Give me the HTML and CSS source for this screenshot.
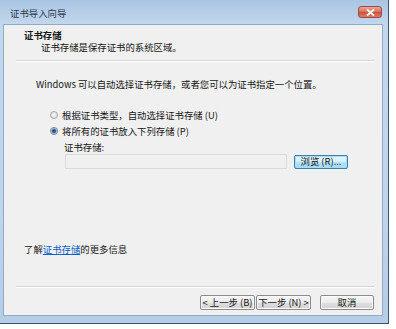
FILE: index.html
```html
<!DOCTYPE html>
<html lang="zh-CN">
<head>
    <meta charset="UTF-8">
    <meta name="viewport" content="width=device-width, initial-scale=1.0">
    <title>证书导入向导</title>
    <link rel="stylesheet" href="styles.css">
</head>
<body>

<div class="window">
    <div class="titlebar">
        <span class="title">证书导入向导</span>
        <span class="close-btn">
            <svg width="9" height="7" viewBox="0 0 9 7"><path d="M1 0.5 L8 6.5 M8 0.5 L1 6.5" stroke="#fff" stroke-width="1.8"/></svg>
        </span>
    </div>

    <div class="client">
        <div class="header">
            <div class="header-title">证书存储</div>
            <div class="header-sub">证书存储是保存证书的系统区域。</div>
        </div>
        <div class="rule"></div>

        <div class="content">
            <p class="intro">Windows 可以自动选择证书存储，或者您可以为证书指定一个位置。</p>

            <div class="option">
                <span class="radio"></span>
                <span>根据证书类型，自动选择证书存储 (U)</span>
            </div>
            <div class="option">
                <span class="radio checked"></span>
                <span>将所有的证书放入下列存储 (P)</span>
            </div>

            <div class="store-label">证书存储:</div>
            <div class="store-row">
                <div class="store-input"></div>
                <button class="btn btn-default">浏览 (R)...</button>
            </div>

            <div class="spacer"></div>
            <p class="more">了解<a href="#">证书存储</a>的更多信息</p>
        </div>

        <div class="rule"></div>
        <div class="footer">
            <button class="btn btn-back">&lt; 上一步 (B)</button>
            <button class="btn btn-next">下一步 (N) &gt;</button>
            <button class="btn btn-cancel">取消</button>
        </div>
    </div>
</div>

</body>
</html>
```

FILE: styles.css
```css
body {
    margin: 0;
    padding: 0;
    background: #ffffff;
    font-family: "Noto Sans CJK SC", "DejaVu Sans", sans-serif;
    font-size: 9.4px;
    line-height: 12px;
    color: #161616;
}
.window {
    width: 388px;
    height: 323px;
    border-right: 1px solid #3b536f;
    border-bottom: 1px solid #3b536f;
    background: linear-gradient(#a9c4e1, #c3d7ed 24px, #c0d5ec 60%, #b6cde6);
    display: flex;
    flex-direction: column;
}
.titlebar {
    height: 24px;
    display: flex;
    justify-content: space-between;
    align-items: flex-start;
    padding: 0 6px 0 10px;
}
.title {
    margin-top: 7px;
    color: #2a3c52;
}
.close-btn {
    margin-top: 6px;
    width: 24px;
    height: 12px;
    box-sizing: border-box;
    border: 1px solid #9a4a40;
    border-radius: 3px;
    background: linear-gradient(#e6a898, #d66e5a 50%, #c9503c 51%, #d98068);
    display: flex;
    align-items: center;
    justify-content: center;
}
.client {
    flex: 1;
    margin: 0 5px 7px 3px;
    border: 1px solid #92aac6;
    background: #f0f0f0;
    display: flex;
    flex-direction: column;
}
.header {
    padding: 4px 0 0 20px;
    height: 31px;
}
.header-title {
    font-weight: bold;
}
.header-sub {
    padding-left: 17px;
}
.rule {
    margin: 0 7px 0 12px;
    border-top: 1px solid #d5d5d5;
    border-bottom: 1px solid #ffffff;
}
.content {
    flex: 1;
    display: flex;
    flex-direction: column;
}
.intro {
    margin: 16px 0 0 32px;
}
.option {
    display: flex;
    align-items: center;
    margin: 0 0 4px 46px;
}
.intro + .option {
    margin-top: 19px;
}
.radio {
    width: 8px;
    height: 8px;
    box-sizing: border-box;
    border: 1px solid #a3a6a8;
    border-radius: 50%;
    background: radial-gradient(#f4f4f4, #d9dcdf);
    margin-right: 4px;
}
.radio.checked {
    border-color: #6f7d8c;
    background: radial-gradient(#1d4c86 30%, #7da4cf 55%, #e9eef3 70%);
}
.store-label {
    margin: 0 0 0 60px;
}
.store-row {
    display: flex;
    align-items: center;
    margin: 1px 0 0 61px;
}
.store-input {
    width: 222px;
    height: 15px;
    box-sizing: border-box;
    border: 1px solid #dadada;
    background: #f0f0f0;
}
.btn {
    font-family: inherit;
    font-size: 9.4px;
    line-height: 11px;
    color: #161616;
    height: 15px;
    padding: 0;
    box-sizing: border-box;
    border: 1px solid #8b8b8b;
    border-radius: 2px;
    background: linear-gradient(#f7f7f7, #ececec 50%, #dfdfdf 50%, #d3d3d3);
    box-shadow: inset 0 0 0 1px #fcfcfc;
}
.btn-default {
    margin-left: 7px;
    width: 54px;
    height: 14px;
    border-color: #3c7fb1;
    background: linear-gradient(#e6f5fd, #d5eefc 50%, #b7e2fa 50%, #a6d8f3);
    box-shadow: inset 0 0 0 1px #9fe0f5;
}
.spacer {
    flex: 1;
}
.more {
    margin: 0 0 31px 20px;
}
.more a {
    color: #0b63c9;
    text-decoration: underline;
}
.footer {
    height: 27px;
    box-sizing: border-box;
    padding: 7px 8px 0 0;
    display: flex;
    justify-content: flex-end;
    align-items: flex-start;
}
.btn-back,
.btn-next {
    width: 55px;
}
.btn-next {
    margin-left: 1px;
}
.btn-cancel {
    width: 54px;
    margin-left: 9px;
}
```
